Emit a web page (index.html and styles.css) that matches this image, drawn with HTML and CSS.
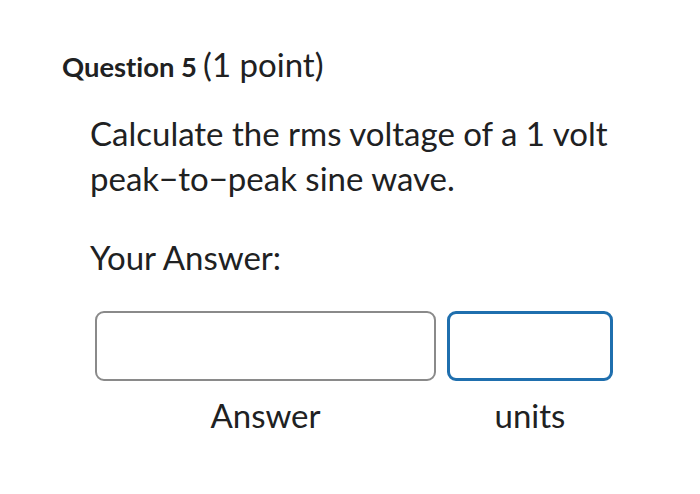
FILE: index.html
```html
<!DOCTYPE html>
<html>
<head>
<meta charset="utf-8">
<link rel="stylesheet" href="styles.css">
</head>
<body>
<div class="page">
  <h2 class="q-title"><span class="q-num">Question 5</span> <span class="q-pts">(1 point)</span></h2>
  <div class="q-body">
    <p class="q-text">Calculate the rms voltage of a 1 volt peak−to−peak sine wave.</p>
    <p class="q-label">Your Answer:</p>
    <div class="answers">
      <div class="field field-answer">
        <div class="box"></div>
        <div class="cap">Answer</div>
      </div>
      <div class="field field-units">
        <div class="box box-focus"></div>
        <div class="cap">units</div>
      </div>
    </div>
  </div>
</div>
</body>
</html>
```

FILE: styles.css
```css
html, body {
  margin: 0;
  padding: 0;
  background: #fff;
}
.page {
  font-family: Lato, "Open Sans", sans-serif;
  color: #202122;
  padding: 44px 0 0 62px;
  font-variant-ligatures: none;
}
.q-title {
  margin: 0;
  font-weight: normal;
  line-height: 40px;
  white-space: nowrap;
}
.q-num {
  font-weight: 700;
  font-size: 27.4px;
}
.q-pts {
  font-size: 33px;
}
.q-body {
  padding-left: 28px;
}
.q-text {
  margin: 23px 0 0 0;
  font-size: 33px;
  line-height: 45px;
  width: 560px;
}
.q-label {
  margin: 34px 0 0 0;
  font-size: 33px;
  line-height: 45px;
}
.answers {
  display: flex;
  gap: 11px;
  margin-top: 31px;
  padding-left: 5px;
}
.field {
  display: flex;
  flex-direction: column;
  align-items: center;
}
.box {
  box-sizing: border-box;
  height: 70px;
  border: 2px solid #8a8a8a;
  border-radius: 9px;
  background: #fff;
}
.field-answer .box { width: 341px; }
.field-units .box { width: 166px; }
.box-focus {
  border: 3px solid #1f6fae;
}
.cap {
  font-size: 33px;
  line-height: 45px;
  margin-top: 12px;
}
```
